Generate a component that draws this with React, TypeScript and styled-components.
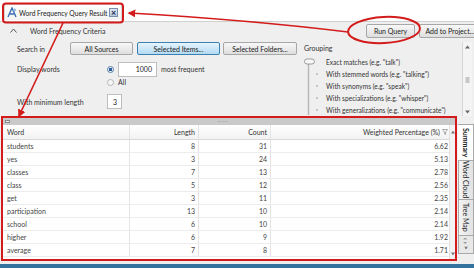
import React from "react";
import styled, { createGlobalStyle } from "styled-components";

const GlobalStyle = createGlobalStyle`
  html, body { margin: 0; padding: 0; background: #fff; }
  * { box-sizing: border-box; }
`;

const RED = "#d31b1b";

const words = [
	{ word: "students", length: 8, count: 31, pct: "6.62" },
	{ word: "yes", length: 3, count: 24, pct: "5.13" },
	{ word: "classes", length: 7, count: 13, pct: "2.78" },
	{ word: "class", length: 5, count: 12, pct: "2.56" },
	{ word: "get", length: 3, count: 11, pct: "2.35" },
	{ word: "participation", length: 13, count: 10, pct: "2.14" },
	{ word: "school", length: 6, count: 10, pct: "2.14" },
	{ word: "higher", length: 6, count: 9, pct: "1.92" },
	{ word: "average", length: 7, count: 8, pct: "1.71" },
];

const groupings = [
	"Exact matches (e.g. \"talk\")",
	"With stemmed words (e.g. \"talking\")",
	"With synonyms (e.g. \"speak\")",
	"With specializations (e.g. \"whisper\")",
	"With generalizations (e.g. \"communicate\")",
];

const App: React.FC = () => {
	return (
		<Root>
			<GlobalStyle />
			<TabStrip>
				<DocTab>
					<svg width="10" height="11" viewBox="0 0 10 11">
						<path d="M1 10 L5 1 L9 10 M3 7 L7 7" stroke="#3a6fb5" strokeWidth="1.4" fill="none" />
						<circle cx="7.5" cy="3" r="1.6" fill="#8fb7e0" />
					</svg>
					<TabTitle>Word Frequency Query Result</TabTitle>
					<CloseBox>×</CloseBox>
				</DocTab>
			</TabStrip>

			<Criteria>
				<CriteriaHeader>
					<svg width="7" height="5" viewBox="0 0 7 5">
						<polyline points="0.5,4.5 3.5,1 6.5,4.5" stroke="#555" strokeWidth="1" fill="none" />
					</svg>
					<HeaderTitle>Word Frequency Criteria</HeaderTitle>
					<Button $w={49} $h={14} style={{ marginLeft: "auto" }}>Run Query</Button>
					<Button $w={62} $h={14} $gap={4} $bleed>
						Add to Project...
					</Button>
				</CriteriaHeader>

				<FormBody>
					<FormLeft>
						<FormRow $top={3} $h={13}>
							<Label $w={53}>Search in</Label>
							<Button $w={63} $h={13}>All Sources</Button>
							<Button $w={83} $h={13} $gap={4} $active>
								Selected Items...
							</Button>
							<Button $w={74} $h={13} $gap={3}>
								Selected Folders...
							</Button>
						</FormRow>
						<FormRow $top={7} $h={14}>
							<Label $w={90}>Display words</Label>
							<Radio $on />
							<NumBox $w={39}>1000</NumBox>
							<Text $gap={4}>most frequent</Text>
						</FormRow>
						<FormRow $top={2} $h={8} $indent={90}>
							<Radio />
							<Text $gap={4}>All</Text>
						</FormRow>
						<FormRow $top={8} $h={15}>
							<Label $w={90}>With minimum length</Label>
							<NumBox $w={15} $gap={0}>
								3
							</NumBox>
						</FormRow>
					</FormLeft>

					<Grouping>
						<GroupLabel>Grouping</GroupLabel>
						<GroupBody>
							<svg width="22" height="60" viewBox="0 0 22 60">
								<line x1="4.5" y1="5" x2="4.5" y2="59" stroke="#b8b8b8" strokeWidth="1.5" />
								{[18, 30, 42, 54].map((y) => (
									<line key={y} x1="12" y1={y} x2="14" y2={y} stroke="#9a9a9a" strokeWidth="1" />
								))}
								<rect x="0.5" y="3" width="10" height="5" rx="2.5" fill="#f7f7f7" stroke="#888" strokeWidth="0.8" />
							</svg>
							<GroupList>
								{groupings.map((g) => (
									<li key={g}>{g}</li>
								))}
							</GroupList>
						</GroupBody>
					</Grouping>

					<CritScroll>
						<svg width="9" height="6" viewBox="0 0 9 6">
							<polygon points="2,4.5 4.5,1.5 7,4.5" fill="#666" />
						</svg>
						<svg width="9" height="6" viewBox="0 0 9 6">
							<line x1="2.5" y1="1" x2="6.5" y2="1" stroke="#999" />
							<line x1="2.5" y1="3" x2="6.5" y2="3" stroke="#999" />
							<line x1="2.5" y1="5" x2="6.5" y2="5" stroke="#999" />
						</svg>
						<svg width="9" height="6" viewBox="0 0 9 6">
							<polygon points="2,1.5 4.5,4.5 7,1.5" fill="#666" />
						</svg>
					</CritScroll>
				</FormBody>
			</Criteria>

			<Results>
				<TableFrame>
					<Splitter>
						<SplitIcon />
						<Grip>· · · ·</Grip>
					</Splitter>
					<TableWrap>
						<Table>
							<HeadRow>
								<Cell>Word</Cell>
								<Cell $right>Length</Cell>
								<Cell $right>Count</Cell>
								<Cell $right $last>
									Weighted Percentage (%)
									<svg width="6" height="6" viewBox="0 0 6 6" style={{ marginLeft: 2 }}>
										<path d="M0.5 0.5 H5.5 L3.6 3 V5.5 L2.4 4.8 V3 Z" fill="none" stroke="#888" strokeWidth="0.7" />
									</svg>
								</Cell>
							</HeadRow>
							{words.map((w) => (
								<Row key={w.word}>
									<Cell>{w.word}</Cell>
									<Cell $right>{w.length}</Cell>
									<Cell $right>{w.count}</Cell>
									<Cell $right $last>
										{w.pct}
									</Cell>
								</Row>
							))}
						</Table>
						<TableScroll>
							<svg width="6" height="6" viewBox="0 0 6 6">
								<polygon points="1,4.5 3,1.5 5,4.5" fill="#777" />
							</svg>
							<svg width="6" height="6" viewBox="0 0 6 6">
								<polygon points="1,1.5 3,4.5 5,1.5" fill="#777" />
							</svg>
						</TableScroll>
					</TableWrap>
				</TableFrame>

				<SideTabs>
					<SideTab $h={37} $active>
						Summary
					</SideTab>
					<SideTab $h={40}>Word Cloud</SideTab>
					<SideTab $h={37}>Tree Map</SideTab>
					<SideNav>
						<span>‹ ›</span>
						<span>˅</span>
					</SideNav>
				</SideTabs>
			</Results>

			<StatusBar />

			<Annotations width="474" height="268" viewBox="0 0 474 268">
				<defs>
					<marker id="head" viewBox="0 0 10 10" refX="8" refY="5" markerWidth="5" markerHeight="5" orient="auto-start-reverse">
						<path d="M0 0 L10 5 L0 10 Z" fill={RED} />
					</marker>
				</defs>
				<rect x="3" y="3.5" width="120" height="19" rx="3" fill="none" stroke={RED} strokeWidth="2" />
				<ellipse cx="384" cy="30" rx="36" ry="13" fill="none" stroke={RED} strokeWidth="2" transform="rotate(-3 384 30)" />
				<path d="M348 32 Q 250 20 129 13" fill="none" stroke={RED} strokeWidth="1.6" markerEnd="url(#head)" />
				<path d="M63 23 L19 116" fill="none" stroke={RED} strokeWidth="1.6" markerEnd="url(#head)" />
			</Annotations>
		</Root>
	);
};

export default App;

const Root = styled.div`
	position: relative;
	width: 474px;
	height: 268px;
	overflow: hidden;
	display: flex;
	flex-direction: column;
	background: #efefef;
	font-family: Lato, "Liberation Sans", sans-serif;
	font-size: 7px;
	color: #333;
`;

const TabStrip = styled.div`
	flex: none;
	height: 22px;
	display: flex;
	align-items: flex-end;
	padding-left: 4px;
	background: #fff;
	border-bottom: 1px solid #cfcfcf;
`;

const DocTab = styled.div`
	display: flex;
	align-items: center;
	width: 118px;
	height: 16px;
	margin-bottom: 1px;
	padding: 0 3px 0 2px;
	background: linear-gradient(#ffffff, #f3f3f3);
	border: 1px solid #d8d8d8;
	border-bottom: none;
`;

const TabTitle = styled.span`
	margin-left: 2px;
	font-size: 6.7px;
	color: #222;
	white-space: nowrap;
`;

const CloseBox = styled.span`
	margin-left: auto;
	width: 9px;
	height: 9px;
	display: flex;
	align-items: center;
	justify-content: center;
	font-size: 9px;
	line-height: 1;
	font-weight: 700;
	color: #1d2f55;
	background: linear-gradient(#dfe7f2, #b9c8dd);
	border: 1px solid #7b8eae;
`;

const Criteria = styled.div`
	flex: none;
	height: 94px;
	display: flex;
	flex-direction: column;
`;

const CriteriaHeader = styled.div`
	height: 18px;
	display: flex;
	align-items: center;
	padding-left: 10px;
`;

const HeaderTitle = styled.span`
	margin-left: 13px;
	color: #333;
`;

const Button = styled.button<{ $w: number; $h: number; $gap?: number; $active?: boolean; $bleed?: boolean }>`
	flex: none;
	width: ${(p) => p.$w}px;
	height: ${(p) => p.$h}px;
	margin-left: ${(p) => p.$gap ?? 0}px;
	margin-right: ${(p) => (p.$bleed ? -7 : 0)}px;
	padding: 0;
	font-family: inherit;
	font-size: 7px;
	color: #222;
	white-space: nowrap;
	border-radius: 2px;
	border: 1px solid ${(p) => (p.$active ? "#3c7fb1" : "#a7a7a7")};
	background: ${(p) => (p.$active ? "linear-gradient(#e6f4fd, #b3daf2)" : "linear-gradient(#f8f8f8, #dedede)")};
`;

const FormBody = styled.div`
	flex: 1;
	display: flex;
`;

const FormLeft = styled.div`
	flex: none;
	width: 304px;
	padding-left: 17px;
	display: flex;
	flex-direction: column;
`;

const FormRow = styled.div<{ $top: number; $h: number; $indent?: number }>`
	display: flex;
	align-items: center;
	margin-top: ${(p) => p.$top}px;
	height: ${(p) => p.$h}px;
	padding-left: ${(p) => p.$indent ?? 0}px;
`;

const Label = styled.span<{ $w: number }>`
	flex: none;
	width: ${(p) => p.$w}px;
	white-space: nowrap;
`;

const Text = styled.span<{ $gap?: number }>`
	margin-left: ${(p) => p.$gap ?? 0}px;
	white-space: nowrap;
`;

const Radio = styled.span<{ $on?: boolean }>`
	flex: none;
	width: 7px;
	height: 7px;
	border-radius: 50%;
	border: 1px solid ${(p) => (p.$on ? "#5a7fa8" : "#b5b5b5")};
	background: ${(p) => (p.$on ? "radial-gradient(circle, #2d5f9c 0 1.6px, #e9f0f8 2px)" : "#f7f7f7")};
`;

const NumBox = styled.span<{ $w: number; $gap?: number }>`
	flex: none;
	width: ${(p) => p.$w}px;
	height: 15px;
	margin-left: ${(p) => p.$gap ?? 4}px;
	display: flex;
	align-items: center;
	justify-content: flex-end;
	padding-right: 4px;
	background: #fff;
	border: 1px solid #bdbdbd;
	color: #222;
`;

const Grouping = styled.div`
	flex: 1;
	display: flex;
	flex-direction: column;
`;

const GroupLabel = styled.div`
	margin-top: 3px;
	height: 13px;
	line-height: 13px;
`;

const GroupBody = styled.div`
	display: flex;
	margin-top: 1px;
`;

const GroupList = styled.ul`
	margin: 0;
	padding: 0;
	list-style: none;
	font-size: 6.6px;
	color: #333;

	& > li {
		height: 12px;
		line-height: 12px;
		white-space: nowrap;
	}
`;

const CritScroll = styled.div`
	flex: none;
	width: 10px;
	margin: 3px 2px 0 0;
	display: flex;
	flex-direction: column;
	align-items: center;
	justify-content: space-between;
	padding: 2px 0 1px;
	background: #f4f4f4;
	border-left: 1px solid #d6d6d6;
`;

const Results = styled.div`
	flex: 1;
	display: flex;
	align-items: flex-start;
`;

const TableFrame = styled.div`
	flex: none;
	width: 456px;
	height: 145px;
	margin-left: 1px;
	display: flex;
	flex-direction: column;
	background: #fff;
	border: 2px solid ${RED};
`;

const Splitter = styled.div`
	flex: none;
	height: 7px;
	display: flex;
	align-items: center;
	padding-left: 2px;
	background: #c9c9c9;
`;

const SplitIcon = styled.span`
	width: 5px;
	height: 3px;
	background: #f2f2f2;
	border: 1px solid #888;
`;

const Grip = styled.span`
	margin: 0 auto;
	font-size: 5px;
	line-height: 1;
	color: #888;
	transform: translateX(-10px);
`;

const TableWrap = styled.div`
	flex: 1;
	display: flex;
`;

const Table = styled.div`
	flex: 1;
	display: flex;
	flex-direction: column;
`;

const HeadRow = styled.div`
	display: grid;
	grid-template-columns: 127px 69px 72px 1fr;
	height: 15px;
	background: linear-gradient(#ffffff, #f2f2f2);
	border-bottom: 1px solid #d9d9d9;
	color: #333;
`;

const Row = styled.div`
	display: grid;
	grid-template-columns: 127px 69px 72px 1fr;
	height: 13px;
	border-bottom: 1px solid #ececec;
	color: #444;
`;

const Cell = styled.div<{ $right?: boolean; $last?: boolean }>`
	display: flex;
	align-items: center;
	justify-content: ${(p) => (p.$right ? "flex-end" : "flex-start")};
	padding: ${(p) => (p.$last ? "0 1px 0 0" : p.$right ? "0 3px 0 0" : "0 0 0 4px")};
	border-right: ${(p) => (p.$last ? "none" : "1px solid #e4e4e4")};
	white-space: nowrap;
`;

const TableScroll = styled.div`
	flex: none;
	width: 6px;
	display: flex;
	flex-direction: column;
	justify-content: space-between;
	padding: 4px 0 2px;
	background: #f3f3f3;
	border-left: 1px solid #e2e2e2;
`;

const SideTabs = styled.div`
	flex: none;
	width: 16px;
	margin: 9px 0 0 1px;
	display: flex;
	flex-direction: column;
`;

const SideTab = styled.div<{ $h: number; $active?: boolean }>`
	height: ${(p) => p.$h}px;
	display: flex;
	align-items: center;
	justify-content: center;
	writing-mode: vertical-rl;
	font-size: 7px;
	font-weight: ${(p) => (p.$active ? 700 : 400)};
	color: #222;
	background: ${(p) => (p.$active ? "#fff" : "linear-gradient(90deg, #f4f4f4, #e2e2e2)")};
	border: 1px solid #a9a9a9;
	border-left: ${(p) => (p.$active ? "none" : "1px solid #a9a9a9")};
	margin-top: -1px;
`;

const SideNav = styled.div`
	flex: 1;
	display: flex;
	flex-direction: column;
	align-items: center;
	gap: 1px;
	padding-top: 2px;
	font-size: 7px;
	font-weight: 700;
	color: #333;
	background: #e8e8e8;
	border: 1px solid #a9a9a9;
	margin-top: -1px;

	& > span:first-child {
		writing-mode: vertical-rl;
		font-weight: 400;
	}
`;

const StatusBar = styled.div`
	flex: none;
	height: 4px;
	background: #35739f;
`;

const Annotations = styled.svg`
	position: absolute;
	left: 0;
	top: 0;
	pointer-events: none;
`;
